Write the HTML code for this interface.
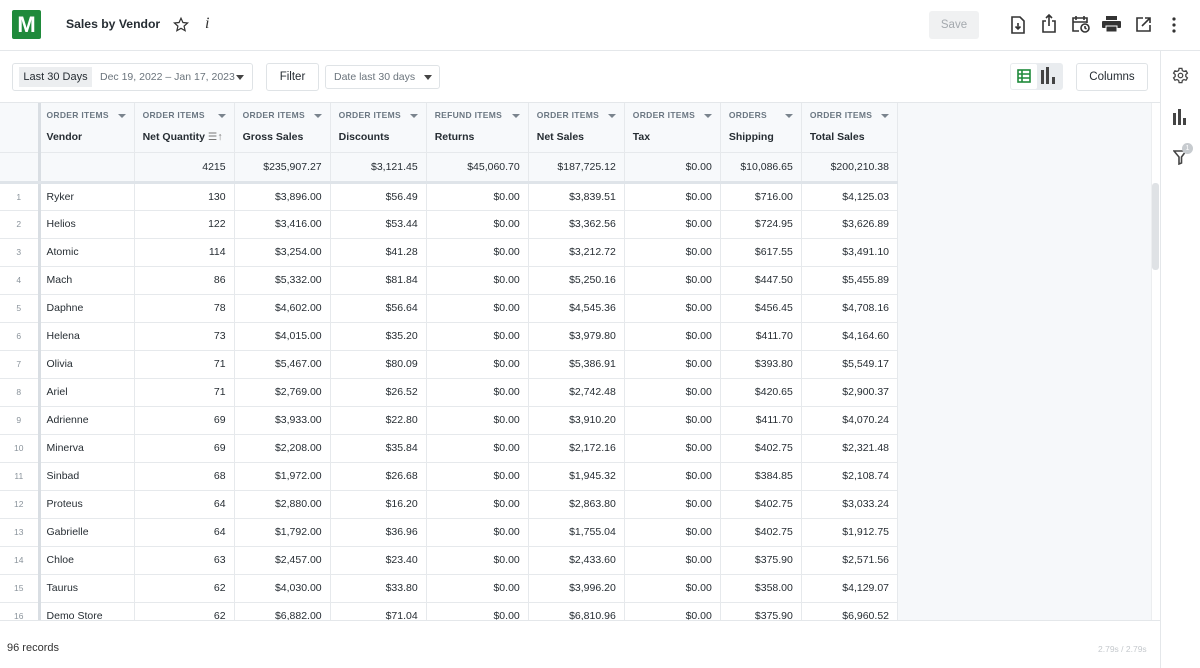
<!DOCTYPE html>
<html><head><meta charset="utf-8"><style>
*{box-sizing:border-box;margin:0;padding:0}
body{width:1200px;height:668px;overflow:hidden;background:#fff;font-family:"Liberation Sans",Arial,sans-serif;color:#262d33;position:relative}
.abs{position:absolute}
.hdr{left:0;top:0;width:1200px;height:51px;border-bottom:1px solid #e4e7ea}
.logo{left:12px;top:10px;width:29px;height:29px;background:#1f8a3b;border-radius:2px;color:#fff;font-weight:bold;font-size:22px;text-align:center;line-height:29px}
.title{left:66px;top:17px;font-size:12.2px;font-weight:bold;color:#262d33}
.btn{border:1px solid #dfe3e6;border-radius:3px;background:#fff;font-size:11.5px;text-align:center}
.side{left:1160px;top:51px;width:1px;height:617px;background:#e4e7ea}
.grid{left:0;top:103px;width:1151px;height:517px;background:#f6f8fa;overflow:hidden}
table{border-collapse:collapse;table-layout:fixed;font-size:10.5px}
td{border-right:1px solid #e6e9ec;border-bottom:1px solid #e6e9ec;height:28px;padding:0 8px;text-align:right;white-space:nowrap;overflow:hidden;background:#fff}
td.n{text-align:center;color:#8a939b;font-size:8.5px;border-right:3px solid #d9dee3;background:#fff}
td.v{text-align:left;padding-left:6px}
tr.h td{background:#f7f9fb;text-align:left;vertical-align:top;height:49px;padding-top:7px}
tr.h td .c{font-size:8.5px;color:#6b7782;font-weight:bold;letter-spacing:.3px;position:relative}
tr.h td .c:after{content:"";position:absolute;right:0;top:4px;border:4px solid transparent;border-top:4px solid #7a848d;border-bottom:0}
tr.h td .t{font-size:10.5px;font-weight:bold;margin-top:11px}
tr.h td.vh{padding-left:6px}
tr.tot td{background:#f7f9fb;border-bottom:3px solid #dfe4e9;height:30px}
.foot{left:0;top:620px;width:1160px;border-top:1px solid #e4e7ea}
</style></head><body>
<div class="abs hdr"></div>
<div class="abs logo">M</div>
<div class="abs title">Sales by Vendor</div>
<svg class="abs" style="left:172px;top:16px" width="18" height="18" viewBox="0 0 24 24"><path d="M12 3l2.6 5.7 6.2.6-4.7 4.2 1.4 6.1L12 16.5 6.5 19.6l1.4-6.1L3.2 9.3l6.2-.6z" fill="none" stroke="#333" stroke-width="1.6"/></svg>
<div class="abs" style="left:205px;top:15px;font-family:'Liberation Serif',serif;font-style:italic;font-size:16px;color:#333">i</div>
<div class="abs" style="left:929px;top:11px;width:50px;height:28px;background:#f0f1f2;border-radius:3px;color:#a4a9ae;font-size:11.5px;text-align:center;line-height:28px">Save</div>
<svg class="abs" style="left:1009px;top:15px" width="18" height="20" viewBox="0 0 18 20" fill="none" stroke="#333" stroke-width="1.6"><path d="M3 2h8l4 4v12H3z"/><path d="M9 8v6M6.5 11.5L9 14l2.5-2.5"/></svg>
<svg class="abs" style="left:1040px;top:13px" width="18" height="21" viewBox="0 0 18 21" fill="none" stroke="#333" stroke-width="1.6"><path d="M6 8H3v11h12V8h-3"/><path d="M9 2v11M6 5l3-3 3 3"/></svg>
<svg class="abs" style="left:1071px;top:14px" width="20" height="20" viewBox="0 0 20 20" fill="none" stroke="#333" stroke-width="1.6"><path d="M8 17H2V4h14v5M2 8h14M5 2v4M13 2v4"/><circle cx="14" cy="14" r="4"/><path d="M14 12v2l1.5 1"/></svg>
<svg class="abs" style="left:1102px;top:16px" width="19" height="17" viewBox="0 0 19 17"><rect x="4" y="0" width="11" height="4" fill="#333"/><rect x="0" y="5" width="19" height="7" rx="1" fill="#333"/><rect x="4" y="10" width="11" height="6" fill="#333" stroke="#fff" stroke-width="1"/></svg>
<svg class="abs" style="left:1135px;top:16px" width="17" height="17" viewBox="0 0 17 17" fill="none" stroke="#333" stroke-width="1.6"><path d="M8 2H2v13h13V9"/><path d="M7 10l8-8M10 2h5v5"/></svg>
<svg class="abs" style="left:1172px;top:17px" width="4" height="16"><circle cx="2" cy="2" r="1.6" fill="#333"/><circle cx="2" cy="8" r="1.6" fill="#333"/><circle cx="2" cy="14" r="1.6" fill="#333"/></svg>

<div class="abs btn" style="left:12px;top:63px;width:241px;height:28px"></div>
<div class="abs" style="left:19px;top:67px;width:73px;height:20px;background:#eceef0;font-size:11px;line-height:20px;text-align:center">Last 30 Days</div>
<div class="abs" style="left:100px;top:71px;font-size:10.5px;color:#6b747c">Dec 19, 2022 – Jan 17, 2023</div>
<div class="abs" style="left:236px;top:75px;border:4px solid transparent;border-top:5px solid #444;border-bottom:0"></div>
<div class="abs btn" style="left:266px;top:63px;width:53px;height:28px;line-height:26px">Filter</div>
<div class="abs btn" style="left:325px;top:65px;width:115px;height:24px;line-height:22px;font-size:10.5px;color:#6b747c;text-align:left;padding-left:8px">Date last 30 days</div>
<div class="abs" style="left:424px;top:75px;border:4px solid transparent;border-top:5px solid #444;border-bottom:0"></div>
<div class="abs" style="left:1010px;top:63px;width:53px;height:27px;background:#e9ecef;border-radius:3px"></div>
<div class="abs" style="left:1011px;top:64px;width:26px;height:25px;background:#fff;border-radius:2px"></div>
<svg class="abs" style="left:1017px;top:69px" width="14" height="14" viewBox="0 0 14 14" fill="none" stroke="#1f8a3b" stroke-width="1.6"><rect x="1" y="1" width="12" height="12"/><path d="M1 5h12M1 9h12M5 1v12"/></svg>
<svg class="abs" style="left:1041px;top:67px" width="15" height="17"><rect x="0" y="3" width="3" height="14" fill="#444"/><rect x="5" y="0" width="3" height="17" fill="#444"/><rect x="11" y="10" width="3" height="7" fill="#444"/></svg>
<div class="abs btn" style="left:1076px;top:63px;width:72px;height:28px;line-height:26px">Columns</div>
<div class="abs" style="left:0;top:102px;width:1160px;height:1px;background:#e4e7ea"></div>
<div class="abs side"></div>
<svg class="abs" style="left:1172px;top:67px" width="17" height="17" viewBox="0 0 24 24" fill="none" stroke="#444" stroke-width="1.8"><circle cx="12" cy="12" r="3.2"/><path d="M10 2h4l.6 3 2.3 1.3 2.9-1 2 3.4-2.3 2v2.6l2.3 2-2 3.4-2.9-1L14.6 19 14 22h-4l-.6-3-2.3-1.3-2.9 1-2-3.4 2.3-2V10.7L2.2 8.7l2-3.4 2.9 1L9.4 5z"/></svg>
<svg class="abs" style="left:1173px;top:109px" width="15" height="16"><rect x="0" y="4" width="3" height="12" fill="#444"/><rect x="5" y="0" width="3" height="16" fill="#444"/><rect x="10" y="9" width="3" height="7" fill="#444"/></svg>
<svg class="abs" style="left:1173px;top:149px" width="14" height="16" viewBox="0 0 14 16" fill="none" stroke="#444" stroke-width="1.6"><path d="M1 2h12L8.5 8v6L6 15V8z"/></svg>
<div class="abs" style="left:1182px;top:143px;width:11px;height:11px;border-radius:6px;background:#c7cbcf;color:#fff;font-size:7px;text-align:center;line-height:11px">1</div>

<div class="abs grid">
<table style="width:898px">
<colgroup><col style="width:39px"><col style="width:95px"><col style="width:100px"><col style="width:96px"><col style="width:96px"><col style="width:102px"><col style="width:96px"><col style="width:96px"><col style="width:81px"><col style="width:96px"></colgroup>
<tr class="h"><td class="n" style="background:#f7f9fb"></td>
<td class="vh"><div class="c">ORDER ITEMS</div><div class="t">Vendor</div></td>
<td><div class="c">ORDER ITEMS</div><div class="t">Net Quantity <span style="color:#777;font-weight:normal">☰↑</span></div></td>
<td><div class="c">ORDER ITEMS</div><div class="t">Gross Sales</div></td>
<td><div class="c">ORDER ITEMS</div><div class="t">Discounts</div></td>
<td><div class="c">REFUND ITEMS</div><div class="t">Returns</div></td>
<td><div class="c">ORDER ITEMS</div><div class="t">Net Sales</div></td>
<td><div class="c">ORDER ITEMS</div><div class="t">Tax</div></td>
<td><div class="c">ORDERS</div><div class="t">Shipping</div></td>
<td><div class="c">ORDER ITEMS</div><div class="t">Total Sales</div></td></tr>
<tr class="tot"><td class="n" style="background:#f7f9fb"></td><td></td><td>4215</td><td>$235,907.27</td><td>$3,121.45</td><td>$45,060.70</td><td>$187,725.12</td><td>$0.00</td><td>$10,086.65</td><td>$200,210.38</td></tr>
<tr><td class="n">1</td><td class="v">Ryker</td><td>130</td><td>$3,896.00</td><td>$56.49</td><td>$0.00</td><td>$3,839.51</td><td>$0.00</td><td>$716.00</td><td>$4,125.03</td></tr>
<tr><td class="n">2</td><td class="v">Helios</td><td>122</td><td>$3,416.00</td><td>$53.44</td><td>$0.00</td><td>$3,362.56</td><td>$0.00</td><td>$724.95</td><td>$3,626.89</td></tr>
<tr><td class="n">3</td><td class="v">Atomic</td><td>114</td><td>$3,254.00</td><td>$41.28</td><td>$0.00</td><td>$3,212.72</td><td>$0.00</td><td>$617.55</td><td>$3,491.10</td></tr>
<tr><td class="n">4</td><td class="v">Mach</td><td>86</td><td>$5,332.00</td><td>$81.84</td><td>$0.00</td><td>$5,250.16</td><td>$0.00</td><td>$447.50</td><td>$5,455.89</td></tr>
<tr><td class="n">5</td><td class="v">Daphne</td><td>78</td><td>$4,602.00</td><td>$56.64</td><td>$0.00</td><td>$4,545.36</td><td>$0.00</td><td>$456.45</td><td>$4,708.16</td></tr>
<tr><td class="n">6</td><td class="v">Helena</td><td>73</td><td>$4,015.00</td><td>$35.20</td><td>$0.00</td><td>$3,979.80</td><td>$0.00</td><td>$411.70</td><td>$4,164.60</td></tr>
<tr><td class="n">7</td><td class="v">Olivia</td><td>71</td><td>$5,467.00</td><td>$80.09</td><td>$0.00</td><td>$5,386.91</td><td>$0.00</td><td>$393.80</td><td>$5,549.17</td></tr>
<tr><td class="n">8</td><td class="v">Ariel</td><td>71</td><td>$2,769.00</td><td>$26.52</td><td>$0.00</td><td>$2,742.48</td><td>$0.00</td><td>$420.65</td><td>$2,900.37</td></tr>
<tr><td class="n">9</td><td class="v">Adrienne</td><td>69</td><td>$3,933.00</td><td>$22.80</td><td>$0.00</td><td>$3,910.20</td><td>$0.00</td><td>$411.70</td><td>$4,070.24</td></tr>
<tr><td class="n">10</td><td class="v">Minerva</td><td>69</td><td>$2,208.00</td><td>$35.84</td><td>$0.00</td><td>$2,172.16</td><td>$0.00</td><td>$402.75</td><td>$2,321.48</td></tr>
<tr><td class="n">11</td><td class="v">Sinbad</td><td>68</td><td>$1,972.00</td><td>$26.68</td><td>$0.00</td><td>$1,945.32</td><td>$0.00</td><td>$384.85</td><td>$2,108.74</td></tr>
<tr><td class="n">12</td><td class="v">Proteus</td><td>64</td><td>$2,880.00</td><td>$16.20</td><td>$0.00</td><td>$2,863.80</td><td>$0.00</td><td>$402.75</td><td>$3,033.24</td></tr>
<tr><td class="n">13</td><td class="v">Gabrielle</td><td>64</td><td>$1,792.00</td><td>$36.96</td><td>$0.00</td><td>$1,755.04</td><td>$0.00</td><td>$402.75</td><td>$1,912.75</td></tr>
<tr><td class="n">14</td><td class="v">Chloe</td><td>63</td><td>$2,457.00</td><td>$23.40</td><td>$0.00</td><td>$2,433.60</td><td>$0.00</td><td>$375.90</td><td>$2,571.56</td></tr>
<tr><td class="n">15</td><td class="v">Taurus</td><td>62</td><td>$4,030.00</td><td>$33.80</td><td>$0.00</td><td>$3,996.20</td><td>$0.00</td><td>$358.00</td><td>$4,129.07</td></tr>
<tr><td class="n">16</td><td class="v">Demo Store</td><td>62</td><td>$6,882.00</td><td>$71.04</td><td>$0.00</td><td>$6,810.96</td><td>$0.00</td><td>$375.90</td><td>$6,960.52</td></tr>
</table>
</div>
<div class="abs" style="left:1151px;top:103px;width:9px;height:517px;background:#fff;border-left:1px solid #eceef0"></div>
<div class="abs" style="left:1152px;top:183px;width:7px;height:87px;background:#dfe2e5;border-radius:3px"></div>
<div class="abs foot"></div>
<div class="abs" style="left:7px;top:642px;font-size:11px;color:#333">96 records</div>
<div class="abs" style="left:1098px;top:644px;font-size:8.5px;color:#c5c9cd">2.79s / 2.79s</div>
</body></html>
